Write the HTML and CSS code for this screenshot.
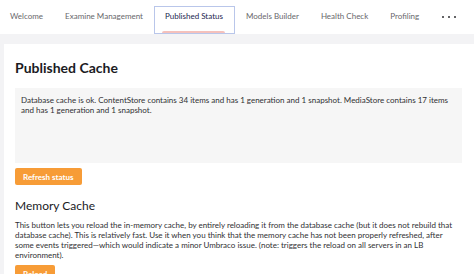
FILE: index.html
```
<!DOCTYPE html>
<html lang="en">
<head>
    <meta charset="UTF-8">
    <meta name="viewport" content="width=device-width, initial-scale=1.0">
    <title>Published Status</title>
    <link rel="stylesheet" href="styles.css">
</head>
<body>
    <div class="tabs">
        <div class="tab">Welcome</div>
        <div class="tab">Examine Management</div>
        <div class="tab active">Published Status</div>
        <div class="tab">Models Builder</div>
        <div class="tab">Health Check</div>
        <div class="tab">Profiling</div>
        <div class="tab more"><span></span><span></span><span></span></div>
    </div>

    <div class="panel">
        <h2>Published Cache</h2>
        <div class="status-box">
            Database cache is ok. ContentStore contains 34 items and has 1 generation and 1 snapshot. MediaStore contains 17 items and has 1 generation and 1 snapshot.
        </div>
        <button class="btn">Refresh status</button>

        <h3>Memory Cache</h3>
        <p>This button lets you reload the in-memory cache, by entirely reloading it from the database cache (but it does not rebuild that database cache). This is relatively fast. Use it when you think that the memory cache has not been properly refreshed, after some events triggered—which would indicate a minor Umbraco issue. (note: triggers the reload on all servers in an LB environment).</p>
        <button class="btn">Reload</button>
    </div>
</body>
</html>
```

FILE: styles.css
```
body {
    margin: 0;
    font-family: Lato, "Open Sans", sans-serif;
    font-size: 8px;
    line-height: 10px;
    color: #303033;
    background: #f3f3f5;
}
.tabs {
    display: flex;
    height: 34px;
    background: white;
}
.tab {
    position: relative;
    box-sizing: border-box;
    height: 28px;
    margin-top: 6px;
    padding: 4px 10px 0;
    color: #68676b;
    border: 1px solid transparent;
    white-space: nowrap;
}
.tab:first-child {
    padding-left: 9px;
}
.tab.active {
    color: #1b264f;
    border-color: #b9c6ea;
    padding-right: 11px;
}
.tab.active::after {
    content: "";
    position: absolute;
    left: 7px;
    right: 9px;
    bottom: 0;
    height: 2px;
    border-radius: 2px 2px 0 0;
    background: #f5c1bc;
}
.tab.more {
    display: flex;
    gap: 4px;
    padding-top: 9px;
    padding-left: 11px;
}
.tab.more span {
    width: 2px;
    height: 2px;
    border-radius: 50%;
    background: #303033;
}
.panel {
    margin: 10px 0 0 4px;
    padding: 14px 12px 0 11px;
    background: white;
    min-height: 300px;
}
h2 {
    margin: 0;
    font-size: 14px;
    line-height: 20px;
    font-weight: 700;
    color: #1b1b1f;
}
.status-box {
    margin-top: 10px;
    min-height: 61px;
    padding: 7px 6px;
    background: #f6f6f6;
    color: #303033;
}
.btn {
    display: block;
    margin-top: 5px;
    height: 17px;
    padding: 0 8px;
    border: none;
    border-radius: 2px;
    background: #f79c37;
    color: white;
    font-family: inherit;
    font-size: 8px;
    font-weight: 700;
}
h3 {
    margin: 13px 0 0;
    font-size: 12px;
    line-height: 16px;
    font-weight: 400;
    color: #1b1b1f;
}
p {
    margin: 6px 0 3px;
}
```
